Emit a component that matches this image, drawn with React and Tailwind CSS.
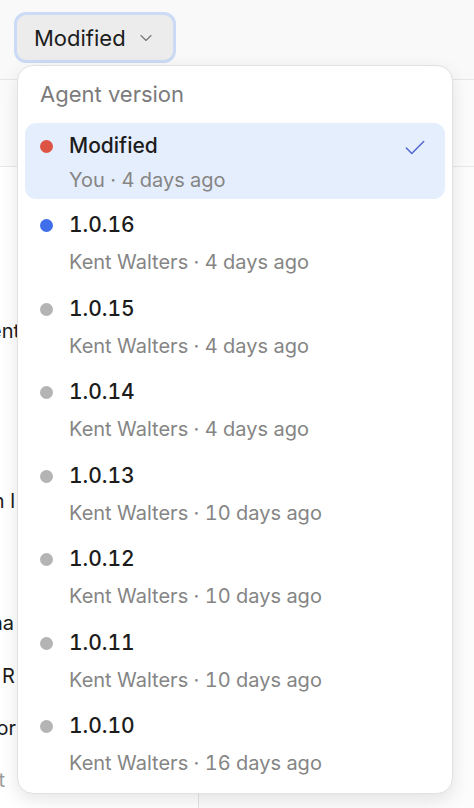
import { ChevronDown, Check } from 'lucide-react'

const versions = [
  { name: 'Modified', author: 'You', when: '4 days ago', dot: 'bg-[#dd5444]', selected: true },
  { name: '1.0.16', author: 'Kent Walters', when: '4 days ago', dot: 'bg-[#3f6ee8]' },
  { name: '1.0.15', author: 'Kent Walters', when: '4 days ago', dot: 'bg-[#b4b4b4]' },
  { name: '1.0.14', author: 'Kent Walters', when: '4 days ago', dot: 'bg-[#b4b4b4]' },
  { name: '1.0.13', author: 'Kent Walters', when: '10 days ago', dot: 'bg-[#b4b4b4]' },
  { name: '1.0.12', author: 'Kent Walters', when: '10 days ago', dot: 'bg-[#b4b4b4]' },
  { name: '1.0.11', author: 'Kent Walters', when: '10 days ago', dot: 'bg-[#b4b4b4]' },
  { name: '1.0.10', author: 'Kent Walters', when: '16 days ago', dot: 'bg-[#b4b4b4]' },
]

// labels of the page underneath, mostly hidden by the open menu
const sideRows = [
  { text: 'Content', cls: 'mt-[138px] text-[#1c1c1c]', pad: 'pr-[10px]' },
  { text: 'Action l', cls: 'mt-[118px] text-[#1c1c1c]', pad: 'pr-[15px]' },
  { text: 'Persona', cls: 'mt-[70px] text-[#1c1c1c]', pad: 'pr-[16px]' },
  { text: 'Top R', cls: 'mt-[1px] text-[#1c1c1c]', pad: 'pr-[15px]' },
  { text: 'Color', cls: 'mt-[0px] text-[#1c1c1c]', pad: 'pr-[14px]' },
  { text: 'Text', cls: 'mt-[0px] text-[#9a9a9a]', pad: 'pr-[25px]' },
]

function VersionItem({ v }) {
  return (
    <div
      className={`flex items-start rounded-[11px] pl-[15px] pr-[17px] pt-[9px] ${
        v.selected ? 'bg-[#e5eefc] pb-[6px]' : 'pb-[7.5px]'
      }`}
    >
      <span className={`mt-[8px] h-[13px] w-[13px] shrink-0 rounded-full ${v.dot}`} />
      <div className="ml-[16px] flex-1">
        <div className="text-[21px] leading-[28px] font-medium tabular-nums text-[#1c1c1c]">
          {v.name}
        </div>
        <div
          className={`${v.selected ? 'mt-[7px]' : 'mt-[10px]'} text-[20px] leading-[26px] tabular-nums text-[#858585]`}
        >
          {v.author} · {v.when}
        </div>
      </div>
      {v.selected && (
        <Check className="mt-[3px] h-[26px] w-[26px] text-[#5067d6]" strokeWidth={1.4} />
      )}
    </div>
  )
}

export default function App() {
  return (
    <div
      className="relative h-[808px] w-[474px] overflow-hidden bg-white"
      style={{ fontFamily: 'Inter, "Noto Sans", sans-serif' }}
    >
      <div className="h-[80px] border-b border-[#e6e6e6] bg-[#f9f9f9] pl-[14px] pt-[12px]">
        <button className="flex h-[51px] w-[162px] items-center rounded-[12px] border-[3px] border-[#cbdaf5] bg-[#ececec] pl-[17px]">
          <span className="text-[22px] leading-[28px] text-[#1c1c1c]">Modified</span>
          <ChevronDown className="ml-[10px] h-[20px] w-[20px] text-[#777]" strokeWidth={1.4} />
        </button>
      </div>
      <div className="h-[87px] border-b border-[#e8e8e8] bg-[#fbfbfb]" />
      <div className="flex h-[641px]">
        <div className="w-[199px] border-r border-[#e4e4e4]">
          <div className="flex w-[30px] flex-col overflow-hidden">
            {sideRows.map((r, i) => (
              <div
                key={i}
                className={`flex h-[52px] items-center justify-end whitespace-nowrap text-[20px] ${r.cls} ${r.pad}`}
              >
                {r.text}
              </div>
            ))}
          </div>
        </div>
        <div className="flex-1 bg-[#fcfcfc]" />
      </div>

      <div className="absolute left-[17px] top-[65px] w-[436px] rounded-[16px] border border-[#e1e1e1] bg-white px-[7px] pb-[9px] pt-[14px] shadow-[0_6px_18px_rgba(0,0,0,0.10)]">
        <div className="pl-[15px] text-[22px] leading-[28px] text-[#7b7b7b]">Agent version</div>
        <div className="mt-[15px] flex flex-col gap-[3px]">
          {versions.map((v) => (
            <VersionItem key={v.name} v={v} />
          ))}
        </div>
      </div>
    </div>
  )
}
